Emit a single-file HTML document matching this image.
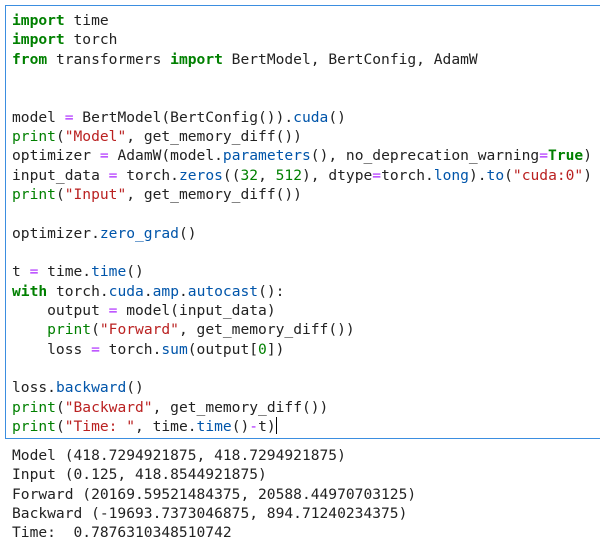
<!DOCTYPE html>
<html><head><style>
body{margin:0;width:600px;height:543px;background:#fff;overflow:hidden;font-family:"DejaVu Sans Mono","Liberation Mono",monospace;font-size:14.6px;color:#222;}
.box{position:absolute;left:5px;top:5px;width:620px;height:434px;border:1px solid #3b8ee0;box-sizing:border-box;}
pre{margin:0;font:inherit;line-height:19.33px;white-space:pre;position:absolute;left:12px;}
.k{color:#008000;font-weight:bold}.b{color:#008000}.o{color:#aa22ff}.m{color:#0055aa}.s{color:#ba2121}.n{color:#008000}
.cur{display:inline-block;width:1px;height:17px;background:#000;vertical-align:-3px}
</style></head><body>
<div class="box"></div>
<pre style="top:11px"><span class="k">import</span> time
<span class="k">import</span> torch
<span class="k">from</span> transformers <span class="k">import</span> BertModel, BertConfig, AdamW


model <span class="o">=</span> BertModel(BertConfig()).<span class="m">cuda</span>()
<span class="b">print</span>(<span class="s">"Model"</span>, get_memory_diff())
optimizer <span class="o">=</span> AdamW(model.<span class="m">parameters</span>(), no_deprecation_warning<span class="o">=</span><span class="k">True</span>)
input_data <span class="o">=</span> torch.<span class="m">zeros</span>((<span class="n">32</span>, <span class="n">512</span>), dtype<span class="o">=</span>torch.<span class="m">long</span>).<span class="m">to</span>(<span class="s">"cuda:0"</span>)
<span class="b">print</span>(<span class="s">"Input"</span>, get_memory_diff())

optimizer.<span class="m">zero_grad</span>()

t <span class="o">=</span> time.<span class="m">time</span>()
<span class="k">with</span> torch.<span class="m">cuda</span>.<span class="m">amp</span>.<span class="m">autocast</span>():
    output <span class="o">=</span> model(input_data)
    <span class="b">print</span>(<span class="s">"Forward"</span>, get_memory_diff())
    loss <span class="o">=</span> torch.<span class="m">sum</span>(output[<span class="n">0</span>])

loss.<span class="m">backward</span>()
<span class="b">print</span>(<span class="s">"Backward"</span>, get_memory_diff())
<span class="b">print</span>(<span class="s">"Time: "</span>, time.<span class="m">time</span>()<span class="o">-</span>t)<span class="cur"></span></pre>
<pre style="top:446px">Model (418.7294921875, 418.7294921875)
Input (0.125, 418.8544921875)
Forward (20169.59521484375, 20588.44970703125)
Backward (-19693.7373046875, 894.71240234375)
Time:  0.7876310348510742</pre>
</body></html>
